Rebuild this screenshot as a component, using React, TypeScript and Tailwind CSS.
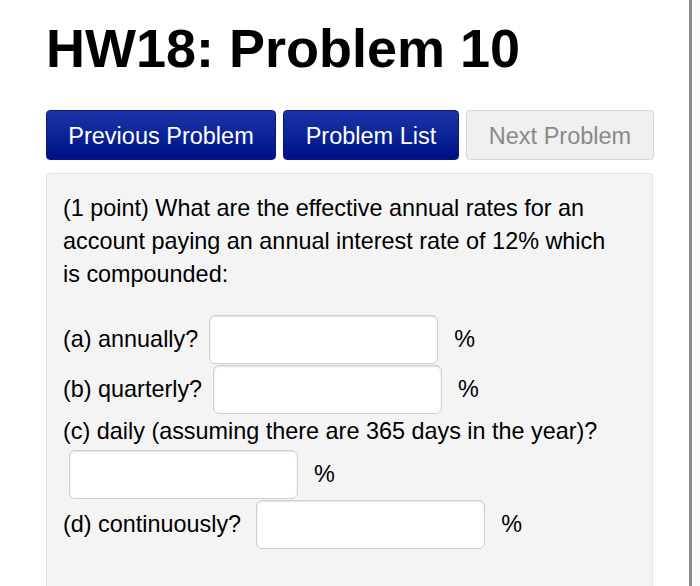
import React from "react";

const font = { fontFamily: '"Liberation Sans", Arial, Helvetica, sans-serif' };

function AnswerBox() {
  return (
    <input
      type="text"
      className="h-[49px] w-[229px] rounded-[6px] border border-[#cfcfcf] bg-white px-2 shadow-[inset_0_1px_2px_rgba(0,0,0,0.12)] outline-none"
    />
  );
}

export default function App() {
  return (
    <div className="flex min-h-[586px] w-[700px] bg-white text-black" style={font}>
      <div className="w-[689px] pl-[46px] pr-[35px]">
        <h1 className="mt-[18px] text-[54px] font-bold leading-[60px]">HW18: Problem 10</h1>

        <div className="mt-[32px] flex gap-[7px]">
          <button className="h-[50px] w-[230px] rounded-[4px] border border-[#0a1775] bg-gradient-to-b from-[#1b35a8] to-[#000f85] pt-[3px] text-[23.5px] text-white">
            Previous Problem
          </button>
          <button className="h-[50px] w-[176px] rounded-[4px] border border-[#0a1775] bg-gradient-to-b from-[#1b35a8] to-[#000f85] pt-[3px] text-[23.5px] text-white">
            Problem List
          </button>
          <button className="h-[50px] w-[188px] rounded-[4px] border border-[#d6d6d6] bg-[#f0f0f0] pt-[3px] text-[23.5px] text-[#8a8a8a]">
            Next Problem
          </button>
        </div>

        <div className="mt-[13px] h-[420px] w-[607px] rounded-t-[4px] border border-b-0 border-[#e2e2e2] bg-[#f4f4f4] pl-[16px] pr-[32px] pt-[18px] text-[23.4px] leading-[33px]">
          <p>
            (1 point) What are the effective annual rates for an account paying an annual
            interest rate of 12% which is compounded:
          </p>

          <div className="mt-[23px] flex h-[50px] items-center">
            <span>(a) annually?</span>
            <span className="ml-[11px]">
              <AnswerBox />
            </span>
            <span className="ml-[16px]">%</span>
          </div>

          <div className="flex h-[50px] items-center">
            <span>(b) quarterly?</span>
            <span className="ml-[11px]">
              <AnswerBox />
            </span>
            <span className="ml-[16px]">%</span>
          </div>

          <div className="flex h-[35px] items-center">(c) daily (assuming there are 365 days in the year)?</div>

          <div className="flex h-[50px] items-center">
            <span className="ml-[6px]">
              <AnswerBox />
            </span>
            <span className="ml-[16px]">%</span>
          </div>

          <div className="flex h-[50px] items-center">
            <span>(d) continuously?</span>
            <span className="ml-[15px]">
              <AnswerBox />
            </span>
            <span className="ml-[16px]">%</span>
          </div>
        </div>
      </div>
      <div className="w-[3px] bg-[#8a8a8a]" />
      <div className="flex-1 bg-[#f9f9f9]" />
    </div>
  );
}
